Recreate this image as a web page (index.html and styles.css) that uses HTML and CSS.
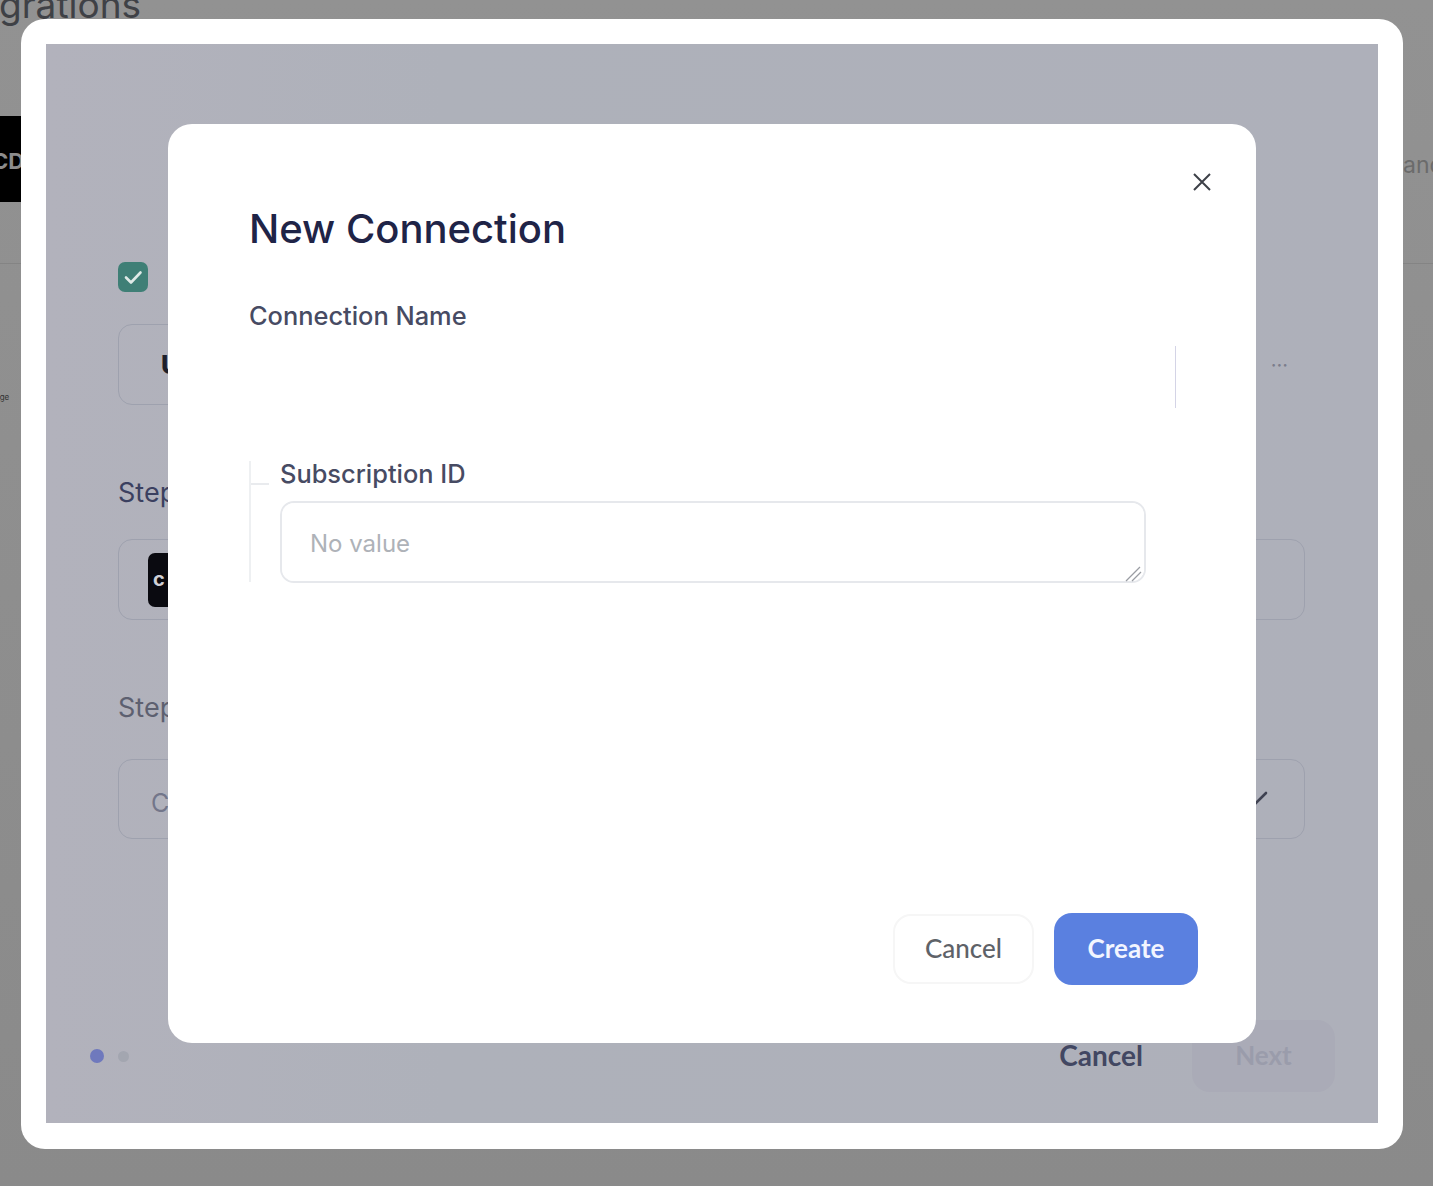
FILE: index.html
```html
<!DOCTYPE html>
<html lang="en">
<head>
<meta charset="utf-8">
<title>New Connection</title>
<link rel="stylesheet" href="styles.css">
</head>
<body>
<div class="page">
  <h1 class="page-title">grations</h1>
  <div class="bg-row">
    <div class="bg-logo">CD</div>
    <div class="bg-tab">and</div>
  </div>
  <div class="bg-rule"></div>
  <div class="bg-tiny">Image</div>

  <section class="sheet">
    <div class="panel">
      <div class="check">
        <svg viewBox="0 0 30 30" width="30" height="30" aria-hidden="true"><path d="M8 15.5l5 5 9.5-10" fill="none" stroke="#dfeae7" stroke-width="2.6" stroke-linecap="round" stroke-linejoin="round"/></svg>
      </div>
      <div class="first-row">
        <div class="box box-first">
          <span class="box-letter">U</span>
        </div>
        <span class="box-more">···</span>
      </div>
      <div class="step">Step 1</div>
      <div class="box box-second">
        <span class="box-chip">c</span>
      </div>
      <div class="step step-two">Step 2</div>
      <div class="box box-third">
        <span class="box-hint">Choose</span>
        <svg class="chevron" viewBox="0 0 28 16" width="28" height="16" aria-hidden="true"><path d="M2 2L14 14 26 2" fill="none" stroke="#3f4252" stroke-width="2.6" stroke-linecap="round"/></svg>
      </div>
      <div class="panel-foot">
        <div class="dots"><i class="dot dot-on"></i><i class="dot"></i></div>
        <div class="foot-actions">
          <span class="foot-cancel">Cancel</span>
          <span class="foot-next">Next</span>
        </div>
      </div>
    </div>

    <div class="modal">
      <button class="close" aria-label="Close">
        <svg viewBox="0 0 20 20" width="20" height="20" aria-hidden="true"><path d="M2 2l16 16M18 2L2 18" fill="none" stroke="#3d4048" stroke-width="2"/></svg>
      </button>
      <h2 class="modal-title">New Connection</h2>
      <label class="label label-name" for="conn">Connection Name</label>
      <input class="name-input" id="conn" type="text">
      <div class="nested">
        <label class="label" for="sub">Subscription ID</label>
        <textarea class="value" id="sub" placeholder="No value"></textarea>
        <svg class="grip" viewBox="0 0 20 20" width="20" height="20" aria-hidden="true"><path d="M3 18L17 4M9 18l9-9" fill="none" stroke="#9a9da3" stroke-width="1.3"/></svg>
      </div>
      <div class="modal-foot">
        <button class="btn btn-ghost">Cancel</button>
        <button class="btn btn-primary">Create</button>
      </div>
    </div>
  </section>
</div>
</body>
</html>
```
FILE: styles.css
```css
* { box-sizing: border-box; }
html, body { margin: 0; height: 100%; }
body { background: #8f8f8f; overflow: hidden; font-family: Inter, "Liberation Sans", sans-serif; }

.page {
  position: relative;
  width: 1433px;
  height: 1186px;
  overflow: hidden;
  background: linear-gradient(#929292, #8a8a8a);
  filter: blur(0.7px);
}
.page-title {
  margin: -14px 0 0 -1px;
  height: 38px;
  font-size: 37px;
  font-weight: 400;
  line-height: 38px;
  color: #3f4146;
}
.bg-row {
  display: flex;
  justify-content: space-between;
  align-items: flex-start;
  margin-top: 92px;
}
.bg-logo {
  width: 21px;
  height: 86px;
  background: #000;
  color: #8c8c8c;
  font-size: 22px;
  font-weight: 700;
  line-height: 90px;
  text-indent: -8px;
  white-space: nowrap;
  overflow: hidden;
}
.bg-tab {
  margin-top: 36px;
  font-size: 23px;
  line-height: 26px;
  color: #6b6b6b;
  width: 30px;
  overflow: hidden;
}
.bg-rule { margin-top: 61px; height: 1px; background: #848484; }
.bg-tiny {
  margin-top: 128px;
  margin-left: -14px;
  font-size: 8px;
  line-height: 10px;
  color: #333;
}

.sheet {
  position: absolute;
  left: 21px;
  top: 19px;
  width: 1382px;
  height: 1130px;
  padding: 25px;
  background: #fff;
  border-radius: 24px;
}
.panel {
  height: 1079px;
  padding: 218px 73px 31px 72px;
  display: flex;
  flex-direction: column;
  background: linear-gradient(90deg, #b2b2bc, #aeb1ba 30%, #aeb0ba);
}
.check {
  width: 30px;
  height: 30px;
  border-radius: 7px;
  background: #3f7f76;
}
.box {
  position: relative;
  display: flex;
  align-items: center;
  height: 81px;
  border: 1.5px solid #9ea1ae;
  border-radius: 14px;
}
.first-row {
  display: flex;
  align-items: center;
  justify-content: space-between;
  margin-top: 32px;
}
.box-first { width: 400px; padding-left: 42px; }
.box-letter { font-size: 26px; font-weight: 800; color: #1d1f2a; }
.box-more { margin-right: 17px; font-size: 20px; line-height: 20px; color: #7b7d8c; }
.step {
  margin-top: 70px;
  font-size: 27px;
  line-height: 36px;
  color: #3b4060;
}
.box-second { margin-top: 28px; padding-left: 29px; }
.step-two { margin-top: 70px; color: #5d6070; }
.box-chip {
  width: 40px;
  height: 54px;
  border-radius: 7px;
  background: #0a0a10;
  color: #cfd0d6;
  font-size: 20px;
  font-weight: 700;
  line-height: 52px;
  padding-left: 5px;
}
.box-third { margin-top: 33px; height: 80px; padding: 0 36px 0 32px; justify-content: space-between; }
.box-hint { font-size: 25px; line-height: 38px; padding-top: 8px; color: #73768a; }
.panel-foot {
  margin-top: auto;
  margin-left: -28px;
  margin-right: -30px;
  display: flex;
  justify-content: space-between;
  align-items: center;
}
.dots { display: flex; align-items: center; gap: 14px; }
.dot { width: 11px; height: 11px; border-radius: 50%; background: #a3a6b0; }
.dot-on { width: 14px; height: 14px; background: #6f79bd; }
.foot-actions { display: flex; align-items: center; gap: 49px; }
.foot-cancel { font-family: Lato, sans-serif; font-size: 28px; line-height: 30px; margin-top: -3px; font-weight: 700; color: #424762; }
.foot-next {
  width: 143px;
  height: 72px;
  border-radius: 18px;
  background: #aaabb7;
  color: #9a9cab;
  font-family: Lato, sans-serif;
  font-size: 26px;
  font-weight: 700;
  line-height: 70px;
  text-align: center;
}

.modal {
  position: absolute;
  left: 147px;
  top: 105px;
  width: 1088px;
  height: 919px;
  padding: 0 58px 58px 81px;
  display: flex;
  flex-direction: column;
  background: #fff;
  border-radius: 24px;
}
.close {
  position: absolute;
  right: 44px;
  top: 48px;
  width: 20px;
  height: 20px;
  padding: 0;
  border: 0;
  background: none;
}
.close svg { display: block; }
.modal-title {
  margin: 81px 0 0;
  font-size: 40px;
  font-weight: 500;
  line-height: 48px;
  color: #1f2447;
}
.label {
  display: block;
  font-size: 25.4px;
  font-weight: 500;
  line-height: 30px;
  color: #474b63;
}
.label-name { margin-top: 48px; }
.name-input {
  display: block;
  width: 927px;
  height: 62px;
  margin-top: 15px;
  border: 0;
  border-right: 1px solid #d4d4e6;
  background: none;
  outline: none;
}
.nested {
  position: relative;
  margin-top: 53px;
  margin-right: 52px;
  padding: 0 0 0 29px;
  border-left: 2px solid #eef0f2;
  height: 121px;
}
.nested::before {
  content: "";
  position: absolute;
  left: 0;
  top: 22px;
  width: 18px;
  height: 2px;
  background: #e9ebee;
}
.nested .label { line-height: 26px; }
.value {
  display: block;
  width: 866px;
  height: 82px;
  margin: 14px 0 0;
  padding: 26px 28px;
  border: 2px solid #e6e8ec;
  border-radius: 14px;
  background: #fff;
  font-family: Inter, sans-serif;
  font-size: 24px;
  line-height: 30px;
  outline: none;
  resize: none;
}
.value::placeholder { color: #aeb2b8; opacity: 1; }
.grip { position: absolute; right: 3px; bottom: -1px; }
.modal-foot {
  margin-top: auto;
  display: flex;
  justify-content: flex-end;
  align-items: center;
  gap: 20px;
}
.btn {
  height: 72px;
  border: 0;
  border-radius: 18px;
  padding-bottom: 4px;
  font-family: Lato, sans-serif;
  font-size: 26px;
  font-weight: 500;
}
.btn-ghost { width: 141px; height: 70px; background: #fff; border: 2px solid #f6f6f6; color: #5e6268; }
.btn-primary { width: 144px; background: #5a80e0; color: #f2f5ff; font-weight: 700; }
```
